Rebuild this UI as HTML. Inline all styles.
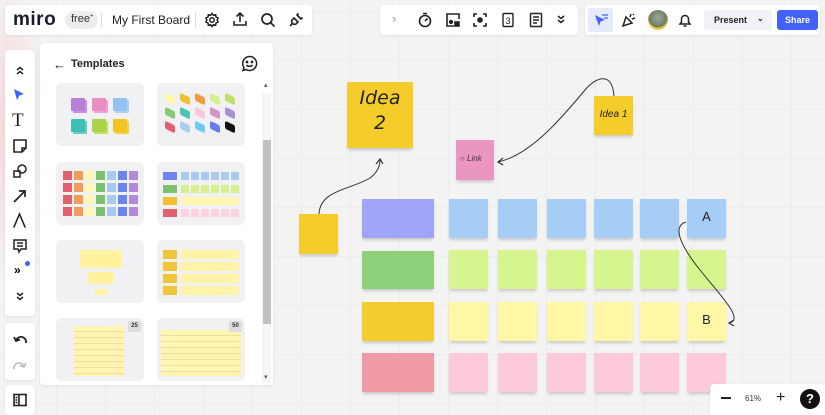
<!DOCTYPE html>
<html><head><meta charset="utf-8"><style>
*{box-sizing:border-box;margin:0;padding:0}
body{width:825px;height:415px;overflow:hidden;position:relative;font-family:"Liberation Sans",sans-serif;
background:#f3f3f3;
background-image:radial-gradient(ellipse 40px 150px at 10px 130px,#f6d6d8 0%,rgba(246,214,216,0) 100%),linear-gradient(#ececec 1px,transparent 1px),linear-gradient(90deg,#ececec 1px,transparent 1px);
background-size:auto,49px 49px,49px 49px;background-position:0 0,0 11px,7px 0}
.a{position:absolute}
.p{position:absolute;background:#fff;border-radius:4px;box-shadow:0 1px 3px rgba(0,0,0,.08)}
.n{position:absolute;box-shadow:0 3px 3px -1px rgba(0,0,0,.18)}
.ic{position:absolute;width:16px;height:16px}
svg{display:block}
.card{position:absolute;width:88px;height:63px;background:#f1f1f3;border-radius:6px;overflow:hidden}
.s{position:absolute;border-radius:1px}
</style></head><body>

<div class="p" style="left:5px;top:5px;width:307px;height:30px">
 <div class="a" style="left:8px;top:4px;font-size:19px;font-weight:bold;color:#1c1c2e;letter-spacing:.5px">miro</div>
 <div class="a" style="left:60px;top:6px;width:33px;height:18px;border-radius:9px;background:#ededf0;font-size:11px;color:#333;padding:2px 0 0 6px">free<sup style="font-size:6px">+</sup></div>
 <div class="a" style="left:96px;top:7px;width:1px;height:16px;background:#ddd"></div>
 <div class="a" style="left:107px;top:8px;font-size:12px;color:#222">My First Board</div>
 <div class="a" style="left:190px;top:7px;width:1px;height:16px;background:#ddd"></div>
 <svg class="ic" style="left:199px;top:7px" viewBox="0 0 16 16" fill="none" stroke="#222" stroke-width="1.5"><circle cx="8" cy="8" r="2.2"/><path d="M8 1.5l1.4 1.8 2.2-.6.4 2.3 2.1 1-1 2 1 2-2.1 1-.4 2.3-2.2-.6L8 14.5l-1.4-1.8-2.2.6-.4-2.3-2.1-1 1-2-1-2 2.1-1 .4-2.3 2.2.6z"/></svg>
 <svg class="ic" style="left:227px;top:6px" viewBox="0 0 16 16" fill="none" stroke="#222" stroke-width="1.6"><path d="M8 11V2M4.5 5.5L8 2l3.5 3.5M2 10v4h12v-4"/></svg>
 <svg class="ic" style="left:255px;top:7px" viewBox="0 0 16 16" fill="none" stroke="#222" stroke-width="1.7"><circle cx="7" cy="7" r="5"/><path d="M10.5 10.5L14.5 14.5"/></svg>
 <svg class="ic" style="left:283px;top:7px" viewBox="0 0 16 16" fill="none" stroke="#222" stroke-width="1.6"><path d="M2 14l3-3M6 6l4 4-2 2a3 3 0 0 1-4-4zM9 3l4 4M10.5 1.5l-2 2M14.5 5.5l-2 2"/></svg>
</div>

<div class="p" style="left:380px;top:5px;width:198px;height:30px">
 <div class="a" style="left:12px;top:6px;font-size:13px;color:#999">›</div>
 <svg class="ic" style="left:37px;top:7px" viewBox="0 0 16 16" fill="none" stroke="#222" stroke-width="1.6"><circle cx="8" cy="9" r="5.5"/><path d="M6 1.5h4M8 9l2.5-2.5"/></svg>
 <svg class="ic" style="left:65px;top:7px" viewBox="0 0 16 16" fill="none" stroke="#222" stroke-width="1.6"><path d="M14 7V2H2v12h7"/><rect x="10" y="10" width="4" height="4" fill="#222"/><circle cx="6" cy="10" r="1.3" fill="#222"/></svg>
 <svg class="ic" style="left:92px;top:7px" viewBox="0 0 16 16" fill="none" stroke="#222" stroke-width="1.6"><path d="M2 5V2h3M11 2h3v3M14 11v3h-3M5 14H2v-3"/><circle cx="8" cy="8" r="2" fill="#222"/></svg>
 <svg class="ic" style="left:120px;top:7px" viewBox="0 0 16 16" fill="none" stroke="#222" stroke-width="1.4"><rect x="3" y="1.5" width="10" height="13" rx="1"/><text x="8" y="12" font-size="9" text-anchor="middle" fill="#222" stroke="none" font-family="Liberation Sans">3</text></svg>
 <svg class="ic" style="left:148px;top:7px" viewBox="0 0 16 16" fill="none" stroke="#222" stroke-width="1.5"><rect x="2.5" y="1.5" width="11" height="13" rx="1"/><path d="M5 5h6M5 8h6M5 11h4"/></svg>
 <svg class="ic" style="left:175px;top:8px;width:12px;height:12px" viewBox="0 0 12 12" fill="none" stroke="#222" stroke-width="1.5"><path d="M3 3l3 2.5L9 3M3 7l3 2.5L9 7"/></svg>
</div>

<div class="p" style="left:585px;top:5px;width:235px;height:30px">
 <div class="a" style="left:3px;top:3px;width:25px;height:24px;background:#e6ebfb;border-radius:3px"></div>
 <svg class="ic" style="left:8px;top:7px" viewBox="0 0 16 16"><path d="M2 3l4 11 1.5-4.5L12 8z" fill="#4262ff"/><path d="M9 3h6M11 6h4" stroke="#4262ff" stroke-width="1.3"/></svg>
 <svg class="ic" style="left:36px;top:7px" viewBox="0 0 16 16" fill="none" stroke="#222" stroke-width="1.5"><path d="M2 14l3-9 6 6zM9 5l1-3M11 7l3-1M12 3l1-1"/></svg>
 <div class="a" style="left:63px;top:5px;width:20px;height:20px;border-radius:50%;background:radial-gradient(circle at 50% 40%,#9aa89a,#6f7a60 60%,#e9c94a 62%)"></div>
 <svg class="ic" style="left:92px;top:7px" viewBox="0 0 16 16" fill="none" stroke="#222" stroke-width="1.5"><path d="M3 12h10l-1.5-2V7a3.5 3.5 0 0 0-7 0v3zM6.5 14h3"/></svg>
 <div class="a" style="left:119px;top:5px;width:68px;height:20px;background:#f1f2f5;border-radius:3px;font-size:9px;font-weight:bold;color:#222;padding:5px 0 0 10px">Present<span style="position:absolute;left:53px;top:4px;font-size:8px">⌄</span></div>
 <div class="a" style="left:192px;top:5px;width:41px;height:20px;background:#4262ff;border-radius:3px;font-size:9px;font-weight:bold;color:#fff;text-align:center;padding-top:5px">Share</div>
</div>

<div class="p" style="left:5px;top:50px;width:30px;height:266px">
 <svg class="ic" style="left:9px;top:14px;width:12px;height:12px" viewBox="0 0 12 12" fill="none" stroke="#222" stroke-width="1.5"><path d="M3 6l3-2.5L9 6M3 10l3-2.5L9 10"/></svg>
 <svg class="ic" style="left:8px;top:38px;width:12px;height:14px" viewBox="0 0 12 14"><path d="M1 1l10 5-4.5 1.5L4 12z" fill="#4262ff"/></svg>
 <div class="a" style="left:7px;top:60px;font-family:'Liberation Serif',serif;font-size:19px;color:#222">T</div>
 <svg class="ic" style="left:7px;top:88px" viewBox="0 0 16 16" fill="none" stroke="#222" stroke-width="1.6"><path d="M2 2h12v8l-4 4H2z"/><path d="M10 14v-4h4"/></svg>
 <svg class="ic" style="left:7px;top:113px" viewBox="0 0 16 16" fill="none" stroke="#222" stroke-width="1.5"><rect x="2" y="8" width="6" height="6"/><circle cx="10" cy="6" r="4"/></svg>
 <svg class="ic" style="left:7px;top:138px" viewBox="0 0 16 16" fill="none" stroke="#222" stroke-width="1.7"><path d="M2 14L13 3M7 3h6v6"/></svg>
 <svg class="ic" style="left:7px;top:162px" viewBox="0 0 16 16" fill="none" stroke="#222" stroke-width="1.6"><path d="M2 15L7.5 2 13 15" stroke-linecap="round"/></svg>
 <svg class="ic" style="left:7px;top:188px" viewBox="0 0 16 16" fill="none" stroke="#222" stroke-width="1.5"><path d="M2 2h12v9H9l-2 3-1-3H2z"/><path d="M5 5h6M5 8h6"/></svg>
 <div class="a" style="left:9px;top:213px;font-size:12px;font-weight:bold">»</div>
 <div class="a" style="left:20px;top:211px;width:5px;height:5px;border-radius:50%;background:#4262ff"></div>
 <svg class="ic" style="left:9px;top:240px;width:12px;height:12px" viewBox="0 0 12 12" fill="none" stroke="#222" stroke-width="1.5"><path d="M3 3l3 2.5L9 3M3 7l3 2.5L9 7"/></svg>
</div>
<div class="p" style="left:5px;top:323px;width:30px;height:57px">
 <svg class="ic" style="left:7px;top:9px" viewBox="0 0 16 16" fill="none" stroke="#222" stroke-width="1.8"><path d="M14 11a5 5 0 0 0-10-2M2 5l2 4 4-1.5"/></svg>
 <svg class="ic" style="left:7px;top:35px" viewBox="0 0 16 16" fill="none" stroke="#bbb" stroke-width="1.6"><path d="M2 11a5 5 0 0 1 10-2M14 5l-2 4-4-1.5"/></svg>
</div>
<div class="p" style="left:5px;top:385px;width:30px;height:30px">
 <svg class="ic" style="left:7px;top:7px" viewBox="0 0 16 16" fill="none" stroke="#222" stroke-width="1.6"><rect x="2" y="2.5" width="12" height="11"/><path d="M7 2.5v11M3.5 5.5h2M3.5 8h2M3.5 10.5h2"/></svg>
</div>

<div class="p" style="left:40px;top:43px;width:233px;height:342px">
 <div class="a" style="left:13px;top:14px;font-size:13px;color:#222">←</div>
 <div class="a" style="left:31px;top:15px;font-size:11px;font-weight:bold;color:#222">Templates</div>
 <svg class="a" style="left:201px;top:12px;width:17px;height:17px" viewBox="0 0 17 17" fill="none" stroke="#222" stroke-width="1.5"><path d="M8.5 1.5a7 7 0 1 1-3.5 13l-3 1 1-3a7 7 0 0 1 5.5-11z"/><circle cx="6" cy="7" r=".6" fill="#222"/><circle cx="11" cy="7" r=".6" fill="#222"/><path d="M5.5 10c1.5 1.8 4.5 1.8 6 0"/></svg>
 <div class="a" style="left:222px;top:50px;width:9px;height:290px;background:#f5f5f5"></div>
 <div class="a" style="left:223px;top:97px;width:8px;height:184px;background:#c1c1c1"></div>
 <div class="a" style="left:224px;top:38px;font-size:7px;color:#555">▴</div>
 <div class="a" style="left:224px;top:330px;font-size:7px;color:#555">▾</div>
</div>

<div class="card" style="left:56px;top:83px">
 <div class="s" style="left:15px;top:15px;width:14px;height:13px;background:#b87fd8;box-shadow:2px 2px 0 #c98fe8"></div>
 <div class="s" style="left:36px;top:15px;width:14px;height:13px;background:#ea8cc4;box-shadow:2px 2px 0 #f2a2d0"></div>
 <div class="s" style="left:57px;top:15px;width:14px;height:13px;background:#93c2f0;box-shadow:2px 2px 0 #a9d0f5"></div>
 <div class="s" style="left:15px;top:36px;width:14px;height:13px;background:#3fc0b6;box-shadow:2px 2px 0 #62cdc3"></div>
 <div class="s" style="left:36px;top:36px;width:14px;height:13px;background:#a9d34a;box-shadow:2px 2px 0 #bfe05e"></div>
 <div class="s" style="left:57px;top:36px;width:14px;height:13px;background:#f1c421;box-shadow:2px 2px 0 #f5d040"></div>
</div>
<div class="card" style="left:157px;top:83px">
 <svg width="88" height="63" viewBox="0 0 88 63"><g transform="skewY(25)"><rect x="8" y="6" width="10" height="8" rx="2" fill="#fff6a8"/><rect x="23" y="-1" width="10" height="8" rx="2" fill="#f0c030"/><rect x="38" y="-8" width="10" height="8" rx="2" fill="#f29d3d"/><rect x="53" y="-15" width="10" height="8" rx="2" fill="#d5ef8a"/><rect x="68" y="-22" width="10" height="8" rx="2" fill="#bede6a"/>
 <rect x="8" y="20" width="10" height="8" rx="2" fill="#86cc72"/><rect x="23" y="13" width="10" height="8" rx="2" fill="#4fc2b6"/><rect x="38" y="6" width="10" height="8" rx="2" fill="#f7c8db"/><rect x="53" y="-1" width="10" height="8" rx="2" fill="#d492c6"/><rect x="68" y="-8" width="10" height="8" rx="2" fill="#a98fd6"/>
 <rect x="8" y="34" width="10" height="8" rx="2" fill="#e2606f"/><rect x="23" y="27" width="10" height="8" rx="2" fill="#a8cdf2"/><rect x="38" y="20" width="10" height="8" rx="2" fill="#6fc9f0"/><rect x="53" y="13" width="10" height="8" rx="2" fill="#6a7df0"/><rect x="68" y="6" width="10" height="8" rx="2" fill="#111"/></g></svg>
</div>
<div class="card" style="left:56px;top:162px">
 <svg width="88" height="63" viewBox="0 0 88 63"><g>
 <g fill="#e0606d"><rect x="7" y="9" width="9" height="9"/><rect x="7" y="21" width="9" height="9"/><rect x="7" y="33" width="9" height="9"/><rect x="7" y="45" width="9" height="9"/></g>
 <g fill="#f29d5a"><rect x="18" y="9" width="9" height="9"/><rect x="18" y="21" width="9" height="9"/><rect x="18" y="33" width="9" height="9"/><rect x="18" y="45" width="9" height="9"/></g>
 <g fill="#fff7b8"><rect x="29" y="9" width="9" height="9"/><rect x="29" y="21" width="9" height="9"/><rect x="29" y="33" width="9" height="9"/><rect x="29" y="45" width="9" height="9"/></g>
 <g fill="#7cc26c"><rect x="40" y="9" width="9" height="9"/><rect x="40" y="21" width="9" height="9"/><rect x="40" y="33" width="9" height="9"/><rect x="40" y="45" width="9" height="9"/></g>
 <g fill="#a5c9f2"><rect x="51" y="9" width="9" height="9"/><rect x="51" y="21" width="9" height="9"/><rect x="51" y="33" width="9" height="9"/><rect x="51" y="45" width="9" height="9"/></g>
 <g fill="#6a86ee"><rect x="62" y="9" width="9" height="9"/><rect x="62" y="21" width="9" height="9"/><rect x="62" y="33" width="9" height="9"/><rect x="62" y="45" width="9" height="9"/></g>
 <g fill="#b08ad6"><rect x="73" y="9" width="9" height="9"/><rect x="73" y="21" width="9" height="9"/><rect x="73" y="33" width="9" height="9"/><rect x="73" y="45" width="9" height="9"/></g></g></svg>
</div>
<div class="card" style="left:157px;top:162px">
 <svg width="88" height="63" viewBox="0 0 88 63">
 <rect x="6" y="10" width="14" height="8" fill="#6f86ee"/><rect x="6" y="23" width="14" height="8" fill="#7cc26c"/><rect x="6" y="35" width="14" height="8" fill="#f0c030"/><rect x="6" y="47" width="14" height="8" fill="#e0606d"/>
 <g fill="#a9cbf2"><rect x="24" y="10" width="8" height="8"/><rect x="34" y="10" width="8" height="8"/><rect x="44" y="10" width="8" height="8"/><rect x="54" y="10" width="8" height="8"/><rect x="64" y="10" width="8" height="8"/><rect x="74" y="10" width="8" height="8"/></g>
 <g fill="#d6f08f"><rect x="24" y="23" width="8" height="8"/><rect x="34" y="23" width="8" height="8"/><rect x="44" y="23" width="8" height="8"/><rect x="54" y="23" width="8" height="8"/><rect x="64" y="23" width="8" height="8"/><rect x="74" y="23" width="8" height="8"/></g>
 <g fill="#fff5b0"><rect x="24" y="35" width="58" height="8"/></g>
 <g fill="#fbd3e0"><rect x="24" y="47" width="8" height="8"/><rect x="34" y="47" width="8" height="8"/><rect x="44" y="47" width="8" height="8"/><rect x="54" y="47" width="8" height="8"/><rect x="64" y="47" width="8" height="8"/><rect x="74" y="47" width="8" height="8"/></g></svg>
</div>
<div class="card" style="left:56px;top:240px">
 <div class="s" style="left:24px;top:10px;width:42px;height:18px;background:#fff3a0"></div>
 <div class="s" style="left:32px;top:32px;width:26px;height:12px;background:#fff3a0"></div>
 <div class="s" style="left:39px;top:49px;width:12px;height:6px;background:#fff3a0"></div>
</div>
<div class="card" style="left:157px;top:240px">
 <svg width="88" height="63" viewBox="0 0 88 63">
 <g fill="#f0c53a"><rect x="6" y="10" width="14" height="9"/><rect x="6" y="22" width="14" height="9"/><rect x="6" y="34" width="14" height="9"/><rect x="6" y="46" width="14" height="9"/></g>
 <g fill="#fff3a8"><rect x="24" y="10" width="58" height="9"/><rect x="24" y="22" width="58" height="9"/><rect x="24" y="34" width="58" height="9"/><rect x="24" y="46" width="58" height="9"/></g></svg>
</div>
<div class="card" style="left:56px;top:318px">
 <div class="s" style="left:18px;top:8px;width:50px;height:50px;background:repeating-linear-gradient(#fff5b0 0 5px,#e8e0a0 5px 6px)"></div>
 <div class="s" style="left:72px;top:3px;width:13px;height:11px;background:#ddd;font-size:6px;font-weight:bold;color:#333;text-align:center;padding-top:2px">25</div>
</div>
<div class="card" style="left:157px;top:318px">
 <div class="s" style="left:4px;top:12px;width:80px;height:46px;background:repeating-linear-gradient(#fff5b0 0 5px,#e8e0a0 5px 6px)"></div>
 <div class="s" style="left:72px;top:3px;width:13px;height:11px;background:#ddd;font-size:6px;font-weight:bold;color:#333;text-align:center;padding-top:2px">50</div>
</div>

<div class="n" style="left:347px;top:82px;width:66px;height:66px;background:#f5cd2a;font-family:'DejaVu Sans',sans-serif;font-style:italic;font-size:19px;text-align:center;line-height:25px;padding-top:4px;color:#222">Idea<br>2</div>
<div class="n" style="left:594px;top:96px;width:39px;height:39px;background:#f5cd2a;font-size:10px;font-style:italic;text-align:center;padding-top:13px;color:#222">Idea 1</div>
<div class="n" style="left:456px;top:140px;width:38px;height:40px;background:#ea96c0;font-size:8px;font-style:italic;padding:14px 0 0 4px;color:#333">○ Link</div>
<div class="n" style="left:299px;top:214px;width:39px;height:40px;background:#f5cd2a"></div>

<div class="n" style="left:362px;top:199px;width:72px;height:39px;background:#9ea4f8"></div>
<div class="n" style="left:362px;top:251px;width:72px;height:38px;background:#8fd07a"></div>
<div class="n" style="left:362px;top:302px;width:72px;height:39px;background:#f3cd2d"></div>
<div class="n" style="left:362px;top:353px;width:72px;height:39px;background:#ef9aa6"></div>

<div class="n" style="left:449px;top:199px;width:39px;height:39px;background:#a6cdf5"></div>
<div class="n" style="left:498px;top:199px;width:39px;height:39px;background:#a6cdf5"></div>
<div class="n" style="left:547px;top:199px;width:39px;height:39px;background:#a6cdf5"></div>
<div class="n" style="left:594px;top:199px;width:39px;height:39px;background:#a6cdf5"></div>
<div class="n" style="left:640px;top:199px;width:39px;height:39px;background:#a6cdf5"></div>
<div class="n" style="left:687px;top:199px;width:39px;height:39px;background:#a6cdf5;font-size:13px;color:#223;text-align:center;padding-top:10px">A</div>

<div class="n" style="left:449px;top:250px;width:39px;height:39px;background:#d6f58f"></div>
<div class="n" style="left:498px;top:250px;width:39px;height:39px;background:#d6f58f"></div>
<div class="n" style="left:547px;top:250px;width:39px;height:39px;background:#d6f58f"></div>
<div class="n" style="left:594px;top:250px;width:39px;height:39px;background:#d6f58f"></div>
<div class="n" style="left:640px;top:250px;width:39px;height:39px;background:#d6f58f"></div>
<div class="n" style="left:687px;top:250px;width:39px;height:39px;background:#d6f58f"></div>

<div class="n" style="left:449px;top:302px;width:39px;height:39px;background:#fff6a6"></div>
<div class="n" style="left:498px;top:302px;width:39px;height:39px;background:#fff6a6"></div>
<div class="n" style="left:547px;top:302px;width:39px;height:39px;background:#fff6a6"></div>
<div class="n" style="left:594px;top:302px;width:39px;height:39px;background:#fff6a6"></div>
<div class="n" style="left:640px;top:302px;width:39px;height:39px;background:#fff6a6"></div>
<div class="n" style="left:687px;top:302px;width:39px;height:39px;background:#fff6a6;font-size:13px;color:#223;text-align:center;padding-top:10px">B</div>

<div class="n" style="left:449px;top:353px;width:39px;height:39px;background:#fccadb"></div>
<div class="n" style="left:498px;top:353px;width:39px;height:39px;background:#fccadb"></div>
<div class="n" style="left:547px;top:353px;width:39px;height:39px;background:#fccadb"></div>
<div class="n" style="left:594px;top:353px;width:39px;height:39px;background:#fccadb"></div>
<div class="n" style="left:640px;top:353px;width:39px;height:39px;background:#fccadb"></div>
<div class="n" style="left:687px;top:353px;width:39px;height:39px;background:#fccadb"></div>

<svg class="a" style="left:0;top:0" width="825" height="415" viewBox="0 0 825 415" fill="none" stroke="#333" stroke-width="1">
 <path d="M319 214C320 190 350 190 370 178C378 172 380 165 380 160"/>
 <path d="M376 164l4-5 3 5" stroke-width="1.2"/>
 <path d="M614 96C612 70 595 78 585 90C560 120 530 155 498 162"/>
 <path d="M503 158l-5 4 5 3" stroke-width="1.2"/>
 <path d="M686 222C672 226 680 245 700 270C720 295 745 320 729 323"/>
 <path d="M734 320l-5 3 5 3" stroke-width="1.2"/>
</svg>

<div class="p" style="left:710px;top:384px;width:115px;height:31px;border-radius:4px 0 0 0">
 <div class="a" style="left:11px;top:13px;width:10px;height:1.5px;background:#222"></div>
 <div class="a" style="left:35px;top:10px;font-size:8px;color:#333">61%</div>
 <div class="a" style="left:66px;top:5px;font-size:16px;color:#222">+</div>
 <div class="a" style="left:90px;top:5px;width:20px;height:20px;border-radius:50%;background:#111;color:#fff;font-size:13px;font-weight:bold;text-align:center;line-height:20px">?</div>
</div>
</body></html>
